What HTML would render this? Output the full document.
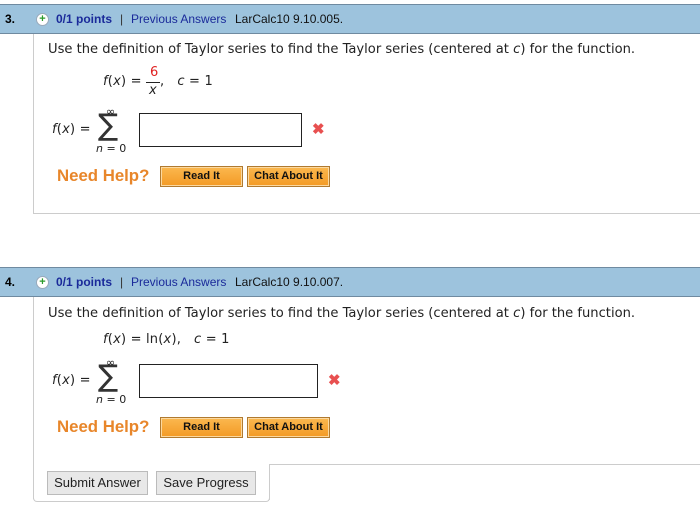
<!DOCTYPE html>
<html><head><style>
body{margin:0;width:700px;height:514px;background:#fff;position:relative;overflow:hidden;font-family:"Liberation Sans",Arial,sans-serif}
.a{position:absolute}
.hdr{position:absolute;left:0;width:700px;height:28px;background:#9dc3dd;border-top:1px solid #6f8aa0;border-bottom:1px solid #6f8aa0;font-size:12px}
.hdr span{position:absolute;top:7px}
.plus{position:absolute;left:36px;top:8px;width:11px;height:11px;border-radius:50%;background:#fff;border:1px solid #9ab;color:#2a9a2a;font-size:11px;line-height:11px;text-align:center;font-weight:bold}
.q{font-family:"DejaVu Sans",Verdana,sans-serif;font-size:13.1px;color:#222}
.m{font-family:"DejaVu Sans",Verdana,sans-serif;font-size:13px;color:#222;letter-spacing:0.2px}
.inp{position:absolute;border:1px solid #222;background:#fff}
.x{position:absolute;color:#e85050;font-size:15px;font-weight:bold}
.nh{position:absolute;color:#e8862a;font-size:16.8px;font-weight:bold}
.btn{position:absolute;height:19px;border:1px solid #b07a30;background:linear-gradient(#fbb84f,#f39a25);box-shadow:inset 0 0 0 1px #fcd9a0;font-size:11px;font-weight:bold;text-align:center;line-height:19px;color:#111}
.gb{position:absolute;height:22px;background:#e8e8e8;border:1px solid #bbb;font-size:13px;line-height:22px;text-align:center;color:#222}
.sig{font-family:"DejaVu Sans",sans-serif;font-size:30px;position:absolute;color:#333}
.sm{font-family:"DejaVu Sans",sans-serif;font-size:11px;position:absolute;color:#222}
</style></head><body>
<div class="hdr" style="top:4px"><span style="left:5px;font-weight:bold">3.</span><div class="plus">+</div><span style="left:56px;font-weight:bold;color:#1a2a9a">0/1 points</span><span style="left:120px;color:#333">|</span><span style="left:131px;color:#1a2a9a">Previous Answers</span><span style="left:235px;color:#111">LarCalc10 9.10.005.</span></div>
<div class="a" style="left:33px;top:34px;width:1px;height:179px;background:#ccc"></div>
<div class="a" style="left:33px;top:213px;width:667px;height:1px;background:#ccc"></div>
<div class="a q" style="left:48px;top:42px">Use the definition of Taylor series to find the Taylor series (centered at <i>c</i>) for the function.</div>
<div class="a m" style="left:103px;top:74px"><i>f</i>(<i>x</i>) = </div>
<div class="a m" style="left:150px;top:65px;color:#e02020">6</div>
<div class="a" style="left:146px;top:82px;width:14px;height:1px;background:#222"></div>
<div class="a m" style="left:149px;top:83px"><i>x</i></div>
<div class="a m" style="left:160px;top:74px">,&nbsp;&nbsp;&nbsp;<i>c</i> = 1</div>
<div class="a m" style="left:52px;top:122px"><i>f</i>(<i>x</i>) = </div>
<div class="sm" style="left:106px;top:105px">∞</div>
<div class="sig" style="left:98px;top:108px">∑</div>
<div class="sm" style="left:96px;top:142px"><i>n</i> = 0</div>
<div class="inp" style="left:139px;top:113px;width:161px;height:32px"></div>
<div class="x" style="left:312px;top:120px">✖</div>
<div class="nh" style="left:57px;top:166px">Need Help?</div>
<div class="btn" style="left:160px;top:166px;width:81px">Read It</div>
<div class="btn" style="left:247px;top:166px;width:81px">Chat About It</div>

<div class="hdr" style="top:267px"><span style="left:5px;font-weight:bold">4.</span><div class="plus">+</div><span style="left:56px;font-weight:bold;color:#1a2a9a">0/1 points</span><span style="left:120px;color:#333">|</span><span style="left:131px;color:#1a2a9a">Previous Answers</span><span style="left:235px;color:#111">LarCalc10 9.10.007.</span></div>
<div class="a" style="left:33px;top:297px;width:1px;height:202px;background:#ccc"></div>
<div class="a" style="left:269px;top:464px;width:431px;height:1px;background:#ccc"></div>
<div class="a" style="left:269px;top:464px;width:1px;height:36px;background:#ccc"></div>
<div class="a" style="left:33px;top:498px;width:237px;height:4px;border-bottom:1px solid #ccc;border-left:1px solid #ccc;border-right:1px solid #ccc;border-radius:0 0 4px 4px;box-sizing:border-box"></div>
<div class="a q" style="left:48px;top:306px">Use the definition of Taylor series to find the Taylor series (centered at <i>c</i>) for the function.</div>
<div class="a m" style="left:103px;top:332px"><i>f</i>(<i>x</i>) = ln(<i>x</i>),&nbsp;&nbsp;&nbsp;<i>c</i> = 1</div>
<div class="a m" style="left:52px;top:373px"><i>f</i>(<i>x</i>) = </div>
<div class="sm" style="left:106px;top:356px">∞</div>
<div class="sig" style="left:98px;top:359px">∑</div>
<div class="sm" style="left:96px;top:393px"><i>n</i> = 0</div>
<div class="inp" style="left:139px;top:364px;width:177px;height:32px"></div>
<div class="x" style="left:328px;top:371px">✖</div>
<div class="nh" style="left:57px;top:417px">Need Help?</div>
<div class="btn" style="left:160px;top:417px;width:81px">Read It</div>
<div class="btn" style="left:247px;top:417px;width:81px">Chat About It</div>
<div class="gb" style="left:47px;top:471px;width:99px">Submit Answer</div>
<div class="gb" style="left:156px;top:471px;width:98px">Save Progress</div>
</body></html>
